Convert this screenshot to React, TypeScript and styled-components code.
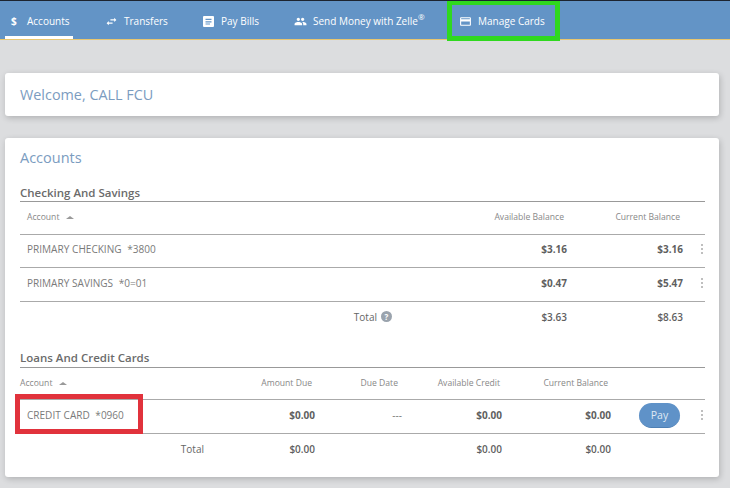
import React from "react";
import styled, { createGlobalStyle } from "styled-components";
import { MdPeople, MdCreditCard, MdSwapHoriz } from "react-icons/md";

const Global = createGlobalStyle`
  html, body { margin: 0; padding: 0; background: #dcdddf; }
  body { font-family: "Open Sans", "Liberation Sans", sans-serif; color: #666; }
  * { box-sizing: border-box; }
`;

const Page = styled.div`
  position: relative;
  width: 730px;
  height: 488px;
  overflow: hidden;
  background: #dcdddf;
  border-top: 1px solid #1c2430;
`;

const Nav = styled.nav`
  display: flex;
  height: 39px;
  padding-left: 5px;
  background: #6394c6;
  border-bottom: 1px solid #e8c66f;
`;

const NavItem = styled.div<{ $active?: boolean; $w: number; $pl: number; $gap: number }>`
  display: flex;
  align-items: center;
  gap: ${(p) => p.$gap}px;
  width: ${(p) => p.$w}px;
  padding: 5px 0 0 ${(p) => p.$pl}px;
  color: #fff;
  font-size: 10px;
  white-space: nowrap;
  border-bottom: 3px solid ${(p) => (p.$active ? "#fff" : "transparent")};
  sup { font-size: 8px; line-height: 0; position: relative; top: -1px; vertical-align: super; }
  svg { flex: none; }
`;

const Dollar = styled.span`
  width: 9px;
  font-size: 10px;
  font-weight: 700;
`;

const Main = styled.main`
  padding: 33px 11px 0 5px;
  display: flex;
  flex-direction: column;
  gap: 22px;
`;

const Card = styled.section`
  background: #fff;
  border-radius: 3px;
  box-shadow: 1px 2px 6px rgba(0, 0, 0, 0.2);
`;

const WelcomeCard = styled(Card)`
  height: 43px;
  padding: 0 15px;
  display: flex;
  align-items: center;
  color: #7b9cbf;
  font-size: 14.4px;
`;

const AccountsCard = styled(Card)`
  height: 339px;
  padding: 10px 14px 0 15px;
`;

const CardTitle = styled.h2`
  margin: 0;
  height: 37px;
  font-size: 14.5px;
  line-height: 20px;
  font-weight: 400;
  color: #7b9cbf;
`;

const SectionTitle = styled.h3<{ $gap?: number; $lh: number }>`
  margin: ${(p) => p.$gap ?? 0}px 0 0;
  height: 17px;
  font-size: 11.5px;
  line-height: ${(p) => p.$lh}px;
  font-weight: 600;
  color: #6b6b6b;
  border-bottom: 1px solid #999;
`;

const Row = styled.div<{ $cols: string; $h: number; $rule?: boolean; $pb: number }>`
  display: grid;
  grid-template-columns: ${(p) => p.$cols};
  align-items: center;
  height: ${(p) => p.$h}px;
  padding-bottom: ${(p) => p.$pb}px;
  border-bottom: ${(p) => (p.$rule ? "1px solid #aaa" : "none")};
`;

const HeadCell = styled.div<{ $right?: number; $left?: number }>`
  font-size: 8.6px;
  color: #888;
  white-space: nowrap;
  text-align: ${(p) => (p.$left !== undefined ? "left" : "right")};
  padding-left: ${(p) => p.$left ?? 0}px;
  padding-right: ${(p) => p.$right ?? 0}px;
  display: ${(p) => (p.$left !== undefined ? "flex" : "block")};
  align-items: center;
  gap: 7px;
`;

const SortCaret = styled.span`
  width: 0;
  height: 0;
  border-left: 4px solid transparent;
  border-right: 4px solid transparent;
  border-bottom: 3px solid #999;
`;

const Name = styled.div`
  padding-left: 7px;
  font-size: 10.05px;
  color: #7a7a7a;
  white-space: nowrap;
  word-spacing: 0.2px;
`;

const Money = styled.div<{ $bold?: boolean }>`
  text-align: right;
  font-size: 10px;
  font-weight: ${(p) => (p.$bold ? 700 : 600)};
  color: #5f5f5f;
`;

const DueCell = styled.div`
  text-align: right;
  font-size: 10px;
  color: #777;
`;

const TotalLabel = styled.div<{ $w: number }>`
  display: flex;
  align-items: center;
  justify-content: flex-end;
  gap: 4px;
  padding-right: ${(p) => p.$w}px;
  font-size: 10px;
  color: #666;
`;

const HelpIcon = styled.span`
  width: 11px;
  height: 11px;
  border-radius: 50%;
  background: #9aa3ad;
  color: #fff;
  font-size: 8px;
  font-weight: 700;
  line-height: 11px;
  text-align: center;
`;

const Dots = styled.div`
  justify-self: end;
  width: 6px;
  display: flex;
  flex-direction: column;
  gap: 2px;
  align-items: center;
  span { width: 2px; height: 2px; background: #aaa; border-radius: 50%; }
`;

const PayWrap = styled.div`
  display: flex;
  justify-content: flex-end;
`;

const PayButton = styled.button`
  width: 41px;
  height: 25px;
  border: none;
  border-radius: 13px;
  background: #5f92c8;
  border-bottom: 1px solid #4e7fb3;
  color: #dfe9f4;
  font: 400 10.5px "Open Sans", sans-serif;
  padding: 0;
`;

const Marker = styled.div<{ $color: string; $x: number; $y: number; $w: number; $h: number; $b: number }>`
  position: absolute;
  left: ${(p) => p.$x}px;
  top: ${(p) => p.$y}px;
  width: ${(p) => p.$w}px;
  height: ${(p) => p.$h}px;
  border: ${(p) => p.$b}px solid ${(p) => p.$color};
  pointer-events: none;
`;

const MoreDots = () => (
  <Dots aria-label="More">
    <span />
    <span />
    <span />
  </Dots>
);

const BillIcon = () => (
  <svg width="11" height="11" viewBox="0 0 11 11" aria-hidden="true">
    <path fill="#fff" fillRule="evenodd" d="M1 0h9a1 1 0 0 1 1 1v9a1 1 0 0 1-1 1H1a1 1 0 0 1-1-1V1a1 1 0 0 1 1-1zM2.5 2.8v1.2h6V2.8zM2.5 5.2v1.2h6V5.2zM2.5 7.6v1h4.5v-1z" />
  </svg>
);

const C1 = "1fr 100px 116px 22px";
const C2 = "241px 54px 87px 100px 109px 69px 25px";

export default function App() {
  return (
    <Page>
      <Global />
      <Nav>
        <NavItem $active $w={68} $pl={6} $gap={7}>
          <Dollar>$</Dollar>
          Accounts
        </NavItem>
        <NavItem $w={97} $pl={32} $gap={6}>
          <MdSwapHoriz size={13} />
          Transfers
        </NavItem>
        <NavItem $w={91} $pl={33} $gap={7}>
          <BillIcon />
          Pay Bills
        </NavItem>
        <NavItem $w={186} $pl={33} $gap={6}>
          <MdPeople size={13} />
          <span>
            Send Money with Zelle<sup>®</sup>
          </span>
        </NavItem>
        <NavItem $w={120} $pl={12} $gap={6}>
          <MdCreditCard size={13} />
          Manage Cards
        </NavItem>
      </Nav>
      <Main>
        <WelcomeCard>Welcome, CALL FCU</WelcomeCard>
        <AccountsCard>
          <CardTitle>Accounts</CardTitle>
          <SectionTitle $lh={16}>Checking And Savings</SectionTitle>
          <Row $cols={C1} $h={33} $rule $pb={2}>
            <HeadCell $left={7}>
              Account <SortCaret />
            </HeadCell>
            <HeadCell $right={3}>Available Balance</HeadCell>
            <HeadCell $right={3}>Current Balance</HeadCell>
            <span />
          </Row>
          <Row $cols={C1} $h={33} $rule $pb={4}>
            <Name>PRIMARY CHECKING&nbsp; *3800</Name>
            <Money $bold>$3.16</Money>
            <Money $bold>$3.16</Money>
            <MoreDots />
          </Row>
          <Row $cols={C1} $h={34} $rule $pb={4}>
            <Name>PRIMARY SAVINGS&nbsp; *0=01</Name>
            <Money $bold>$0.47</Money>
            <Money $bold>$5.47</Money>
            <MoreDots />
          </Row>
          <Row $cols={C1} $h={33} $pb={4}>
            <TotalLabel $w={75}>
              Total <HelpIcon>?</HelpIcon>
            </TotalLabel>
            <Money>$3.63</Money>
            <Money>$8.63</Money>
            <span />
          </Row>
          <SectionTitle $gap={16} $lh={14}>Loans And Credit Cards</SectionTitle>
          <Row $cols={C2} $h={32} $rule $pb={1}>
            <HeadCell $left={0}>
              Account <SortCaret />
            </HeadCell>
            <HeadCell $right={3}>Amount Due</HeadCell>
            <HeadCell $right={4}>Due Date</HeadCell>
            <HeadCell $right={2}>Available Credit</HeadCell>
            <HeadCell $right={3}>Current Balance</HeadCell>
            <span />
            <span />
          </Row>
          <Row $cols={C2} $h={34} $rule $pb={3}>
            <Name>CREDIT CARD&nbsp; *0960</Name>
            <Money $bold>$0.00</Money>
            <DueCell>---</DueCell>
            <Money $bold>$0.00</Money>
            <Money $bold>$0.00</Money>
            <PayWrap>
              <PayButton>Pay</PayButton>
            </PayWrap>
            <MoreDots />
          </Row>
          <Row $cols={C2} $h={32} $pb={2}>
            <TotalLabel $w={57}>Total</TotalLabel>
            <Money>$0.00</Money>
            <span />
            <Money>$0.00</Money>
            <Money>$0.00</Money>
            <span />
            <span />
          </Row>
        </AccountsCard>
      </Main>
      <Marker $color="#2fd81f" $x={447} $y={-1} $w={113} $h={41} $b={5} />
      <Marker $color="#e1323c" $x={15} $y={393} $w={128} $h={40} $b={5} />
    </Page>
  );
}
